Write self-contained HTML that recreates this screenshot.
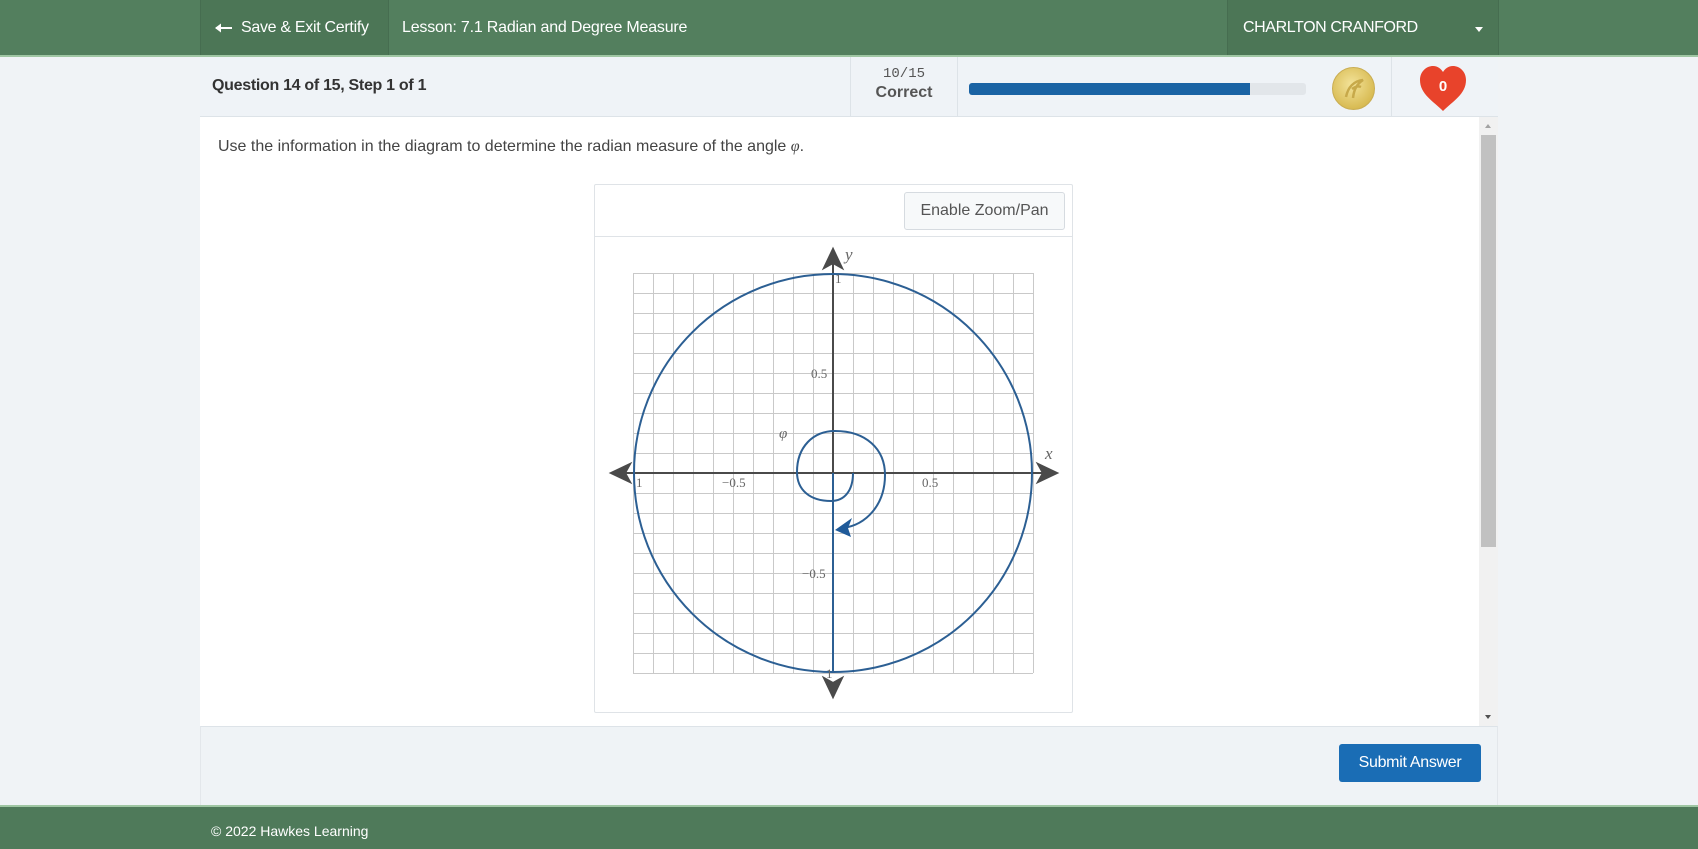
<!DOCTYPE html>
<html><head><meta charset="utf-8"><style>
*{box-sizing:border-box;margin:0;padding:0}
body{width:1698px;height:849px;overflow:hidden;background:#f0f3f6;font-family:"Liberation Sans",sans-serif;position:relative;color:#333}
.abs{position:absolute}
#hdr{left:0;top:0;width:1698px;height:57px;background:#537f5e;border-bottom:2px solid #9fc6a3}
.hbox{top:0;height:55px;background:#4c7656;border-left:1px solid #466d50;border-right:1px solid #466d50}
.ht{color:#fff;font-size:16px;top:19px;white-space:nowrap}
#qbar{left:200px;top:57px;width:1298px;height:60px;background:#eff3f7;border-bottom:1px solid #dde3e8}
#content{left:200px;top:117px;width:1298px;height:609px;background:#fff}
#bottom{left:200px;top:726px;width:1298px;height:79px;background:#eff3f6;border-top:1px solid #dde3e8;border-left:1px solid #e3e7eb;border-right:1px solid #e3e7eb}
#foot{left:0;top:805px;width:1698px;height:44px;background:#4f7a5a;border-top:2px solid #9fc6a3}
</style></head><body>
<div id="hdr" class="abs"></div>
<div class="abs hbox" style="left:200px;width:189px"></div>
<svg class="abs" style="left:215px;top:23px" width="18" height="10"><path d="M1 5H17" stroke="#fff" stroke-width="2"/><path d="M0 5L6 0.5V9.5Z" fill="#fff"/></svg>
<div class="abs ht" style="left:241px;letter-spacing:-0.3px">Save &amp; Exit Certify</div>
<div class="abs ht" style="left:402px;letter-spacing:-0.2px">Lesson: 7.1 Radian and Degree Measure</div>
<div class="abs hbox" style="left:1227px;width:272px"></div>
<div class="abs ht" style="left:1243px;letter-spacing:-0.4px">CHARLTON CRANFORD</div>
<div class="abs" style="left:1475px;top:27px;width:0;height:0;border-left:4px solid transparent;border-right:4px solid transparent;border-top:5px solid #fff"></div>

<div id="qbar" class="abs"></div>
<div class="abs" style="left:212px;top:77px;font-size:16px;font-weight:bold;color:#333;letter-spacing:-0.3px">Question 14 of 15, Step 1 of 1</div>
<div class="abs" style="left:850px;top:57px;width:108px;height:60px;border-left:1px solid #dde3e8;border-right:1px solid #dde3e8;text-align:center">
<div style="font-family:'Liberation Mono',monospace;font-size:14px;color:#555;margin-top:9px">10/15</div>
<div style="font-size:16px;font-weight:bold;color:#555;margin-top:2px">Correct</div></div>
<div class="abs" style="left:969px;top:83px;width:337px;height:12px;background:#e2e6ea;border-radius:3px"></div>
<div class="abs" style="left:969px;top:83px;width:281px;height:12px;background:#1a63a4;border-radius:3px 0 0 3px"></div>
<div class="abs" style="left:1332px;top:67px;width:43px;height:43px;border-radius:50%;background:radial-gradient(circle at 45% 40%,#f3e39a,#d9bc55 70%,#c6a640);border:1px solid #c9ad52"></div>
<svg class="abs" style="left:1332px;top:67px" width="43" height="43"><path d="M14 30C16 20 22 14 31 13C25 17 22 22 21 31M20 22C24 19 27 19 29 20" stroke="#c7a94a" stroke-width="2.5" fill="none"/></svg>
<div class="abs" style="left:1391px;top:57px;width:1px;height:60px;background:#dde3e8"></div>
<svg class="abs" style="left:1419px;top:66px" width="48" height="46" viewBox="0 0 48 46"><path d="M24 45 C14 35 1 28 1 14 C1 5 8 0 14 0 C19 0 22 3 24 6 C26 3 29 0 34 0 C40 0 47 5 47 14 C47 28 34 35 24 45Z" fill="#e8432b"/><text x="24" y="25" text-anchor="middle" font-family="Liberation Sans" font-weight="bold" font-size="15" fill="#fff">0</text></svg>

<div id="content" class="abs"></div>
<div class="abs" style="left:1479px;top:117px;width:19px;height:609px;background:#f1f1f1"></div>
<div class="abs" style="left:1481px;top:135px;width:15px;height:412px;background:#c1c1c1"></div>
<div class="abs" style="left:1485px;top:124px;border-left:3px solid transparent;border-right:3px solid transparent;border-bottom:4px solid #a3a3a3"></div>
<div class="abs" style="left:1485px;top:715px;border-left:3px solid transparent;border-right:3px solid transparent;border-top:4px solid #505050"></div>
<div class="abs" style="left:218px;top:138px;font-size:16px;color:#444">Use the information in the diagram to determine the radian measure of the angle <i style="font-family:'Liberation Serif',serif">φ</i>.</div>

<div class="abs" style="left:594px;top:184px;width:479px;height:529px;border:1px solid #dfe3e7;border-radius:2px;background:#fff"></div>
<div class="abs" style="left:595px;top:236px;width:477px;height:1px;background:#dfe3e7"></div>
<div class="abs" style="left:904px;top:192px;width:161px;height:38px;border:1px solid #d6dbe0;border-radius:3px;background:#f7f9fa;font-size:16px;color:#555;text-align:center;line-height:36px">Enable Zoom/Pan</div>

<svg class="abs" style="left:0;top:0" width="1698" height="849">
<g stroke="#c9c9c9" stroke-width="1">
<path d="M633.5 273V673M653.5 273V673M673.5 273V673M693.5 273V673M713.5 273V673M733.5 273V673M753.5 273V673M773.5 273V673M793.5 273V673M813.5 273V673M853.5 273V673M873.5 273V673M893.5 273V673M913.5 273V673M933.5 273V673M953.5 273V673M973.5 273V673M993.5 273V673M1013.5 273V673M1033.5 273V673"/>
<path d="M633 273.5H1033M633 293.5H1033M633 313.5H1033M633 333.5H1033M633 353.5H1033M633 373.5H1033M633 393.5H1033M633 413.5H1033M633 433.5H1033M633 453.5H1033M633 493.5H1033M633 513.5H1033M633 533.5H1033M633 553.5H1033M633 573.5H1033M633 593.5H1033M633 613.5H1033M633 633.5H1033M633 653.5H1033M633 673.5H1033"/>
</g>
<g stroke="#4a4a4a" stroke-width="2" fill="#4a4a4a">
<path d="M620 473H1048M833 258V673" fill="none"/>
<path d="M611 473L630 464L625 473L630 482Z"/>
<path d="M1057 473L1038 464L1043 473L1038 482Z"/>
<path d="M833 249L824 268L833 263L842 268Z"/>
<path d="M833 697L824 678L833 683L842 678Z"/>
</g>
<path d="M833 473V673" stroke="#2c5f93" stroke-width="2"/>
<circle cx="833" cy="473" r="199" fill="none" stroke="#2c5f93" stroke-width="2"/>
<path d="M853 473C853 490 845 501 831 501C810 501 797 490 797 472C797 447 813 431 835 431C866 431 885 449 885 475C885 505 866 525 843 528" fill="none" stroke="#2c5f93" stroke-width="2"/>
<path d="M835 530L852 518L848 528L851 537Z" fill="#1f5a99"/>
<g font-family="Liberation Serif,serif" font-size="13" fill="#666">
<text x="811" y="378">0.5</text>
<text x="802" y="578">−0.5</text>
<text x="722" y="487">−0.5</text>
<text x="922" y="487">0.5</text>
<text x="636" y="487">1</text>
<text x="835" y="283">1</text>
<text x="826" y="678">1</text>
<text x="779" y="438" font-style="italic" font-size="15">φ</text>
<text x="1045" y="459" font-style="italic" font-size="17">x</text>
<text x="845" y="260" font-style="italic" font-size="17">y</text>
</g>
</svg>

<div id="bottom" class="abs"></div>
<div class="abs" style="left:1339px;top:744px;width:142px;height:38px;background:#1a6db5;border-radius:3px;color:#fff;font-size:16px;text-align:center;line-height:38px;letter-spacing:-0.3px">Submit Answer</div>
<div id="foot" class="abs"></div>
<div class="abs" style="left:211px;top:823px;color:#fff;font-size:14px">© 2022 Hawkes Learning</div>
</body></html>
